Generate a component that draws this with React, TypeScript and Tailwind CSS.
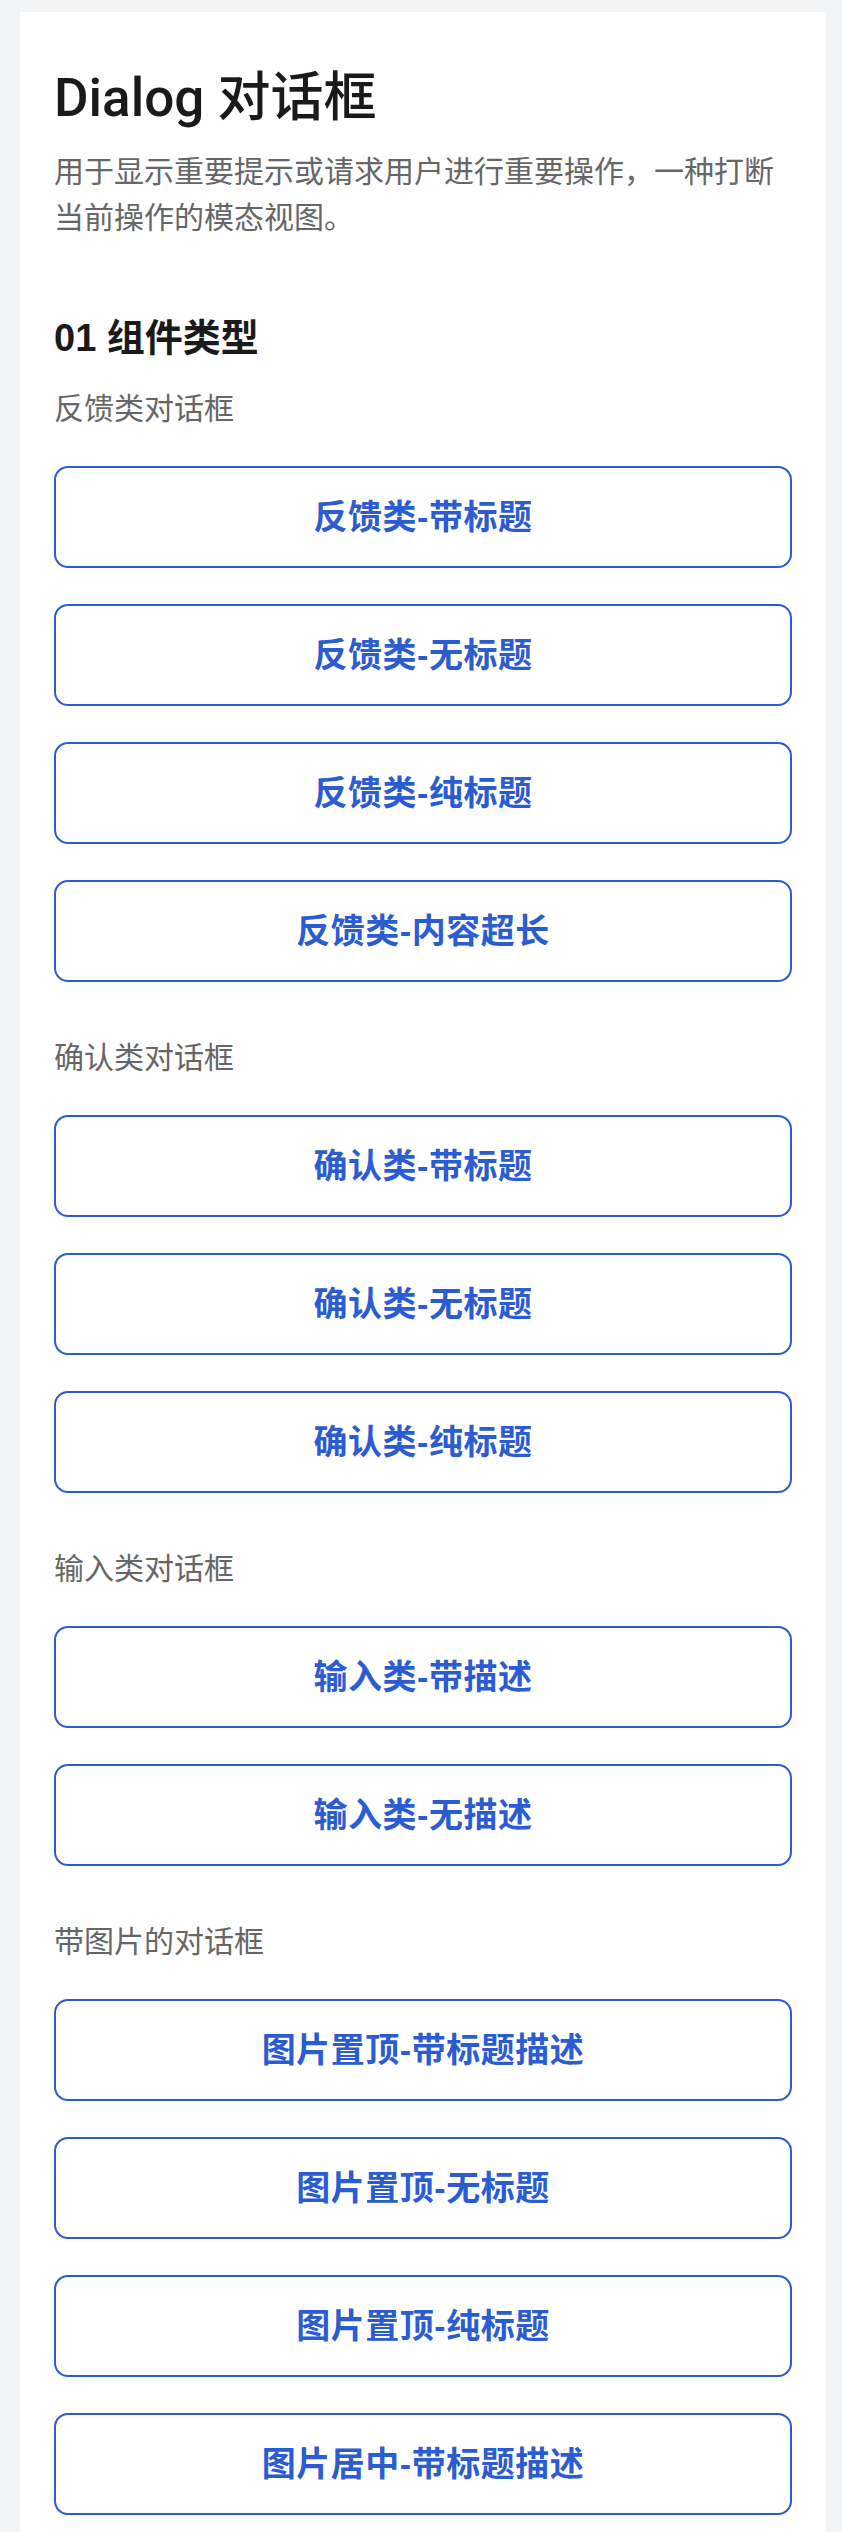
const groups = [
  {
    title: "反馈类对话框",
    items: ["反馈类-带标题", "反馈类-无标题", "反馈类-纯标题", "反馈类-内容超长"],
  },
  {
    title: "确认类对话框",
    items: ["确认类-带标题", "确认类-无标题", "确认类-纯标题"],
  },
  {
    title: "输入类对话框",
    items: ["输入类-带描述", "输入类-无描述"],
  },
  {
    title: "带图片的对话框",
    items: [
      "图片置顶-带标题描述",
      "图片置顶-无标题",
      "图片置顶-纯标题",
      "图片居中-带标题描述",
    ],
  },
];

export default function App() {
  return (
    <div
      className="min-h-screen bg-[#f2f3f5] pt-[12px] pl-[20px] pr-[16px]"
      style={{ fontFamily: '"Liberation Sans", "Noto Sans CJK SC", sans-serif' }}
    >
      <div className="bg-white px-[34px] pt-[52px] pb-[60px]">
        <h1 className="font-['Roboto','Noto_Sans_CJK_SC',sans-serif] text-[53px] leading-[68px] font-medium text-[#1a1a1a]">
          Dialog 对话框
        </h1>
        <p className="mt-[17px] text-[30px] leading-[46px] text-[#666666]">
          用于显示重要提示或请求用户进行重要操作，一种打断当前操作的模态视图。
        </p>

        <h2 className="mt-[70px] text-[38px] leading-[54px] font-semibold text-[#1a1a1a]">
          01 组件类型
        </h2>

        {groups.map((g, i) => (
          <div key={g.title} className={i === 0 ? "mt-[21px]" : "mt-[53px]"}>
            <div className="text-[30px] leading-[45px] text-[#666666]">
              {g.title}
            </div>
            <div className="mt-[35px] flex flex-col gap-[36px]">
              {g.items.map((item) => (
                <button
                  key={item}
                  className="h-[102px] w-full rounded-[14px] border-2 border-[#2b5cd1] bg-white text-[34px] font-semibold tracking-[0.5px] text-[#2b5cd1] flex items-center justify-center"
                >
                  {item}
                </button>
              ))}
            </div>
          </div>
        ))}
      </div>
    </div>
  );
}
